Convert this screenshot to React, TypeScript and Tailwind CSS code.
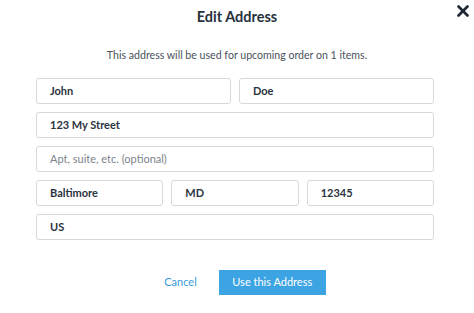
import { X } from "lucide-react";

function Field({ value, placeholder, className = "" }: { value?: string; placeholder?: string; className?: string }) {
  return (
    <div
      className={`h-[26px] flex items-center px-[13px] border border-[#d6d9dc] rounded-[3px] bg-white text-[11px] ${
        value ? "font-bold text-[#2b3340]" : "text-[#7d848c]"
      } ${className}`}
    >
      {value ?? placeholder}
    </div>
  );
}

export default function App() {
  return (
    <div className="relative w-[474px] h-[313px] bg-white font-['Lato',sans-serif]">
      <button className="absolute right-[2px] top-[2px] text-[#1f2833]">
        <X size={18} strokeWidth={3.6} />
      </button>
      <h1 className="pt-[8px] text-center text-[14.5px] font-bold text-[#27313d] leading-[18px]">Edit Address</h1>
      <p className="mt-[22px] text-center text-[10.6px] text-[#4a525b] leading-[14px]">
        This address will be used for upcoming order on 1 items.
      </p>
      <div className="ml-[36px] w-[398px] mt-[16px] flex flex-col gap-[8px]">
        <div className="grid grid-cols-2 gap-[8px]">
          <Field value="John" />
          <Field value="Doe" />
        </div>
        <Field value="123 My Street" />
        <Field placeholder="Apt, suite, etc. (optional)" />
        <div className="grid grid-cols-3 gap-[8px]">
          <Field value="Baltimore" />
          <Field value="MD" />
          <Field value="12345" />
        </div>
        <Field value="US" />
      </div>
      <div className="mt-[30px] flex items-center justify-center gap-[22px] pl-[16px]">
        <button className="text-[11px] text-[#3a9bd9]">Cancel</button>
        <button className="w-[107px] h-[25px] bg-[#3ca4e2] text-white text-[11px]">Use this Address</button>
      </div>
    </div>
  );
}
